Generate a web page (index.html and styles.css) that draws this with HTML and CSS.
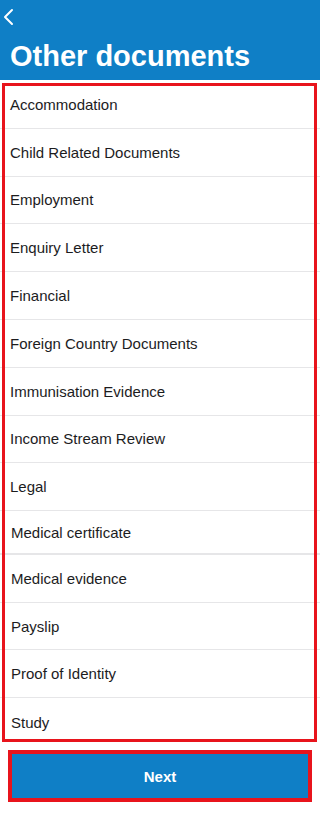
FILE: index.html
```html
<!DOCTYPE html>
<html lang="en">
<head>
<meta charset="utf-8">
<title>Other documents</title>
<link rel="stylesheet" href="styles.css">
</head>
<body>
<header class="header">
  <div class="nav">
    <svg class="back" width="12" height="18" viewBox="0 0 12 18"><path d="M10 2 L3 9 L10 16" fill="none" stroke="#fff" stroke-width="2" stroke-linecap="round" stroke-linejoin="round"/></svg>
  </div>
  <h1 class="title">Other documents</h1>
</header>
<section class="list">
  <div class="group">
    <div class="item">Accommodation</div>
    <div class="item">Child Related Documents</div>
    <div class="item">Employment</div>
    <div class="item">Enquiry Letter</div>
    <div class="item">Financial</div>
    <div class="item">Foreign Country Documents</div>
    <div class="item">Immunisation Evidence</div>
    <div class="item">Income Stream Review</div>
    <div class="item">Legal</div>
  </div>
  <div class="group group-b">
    <div class="item item-mc">Medical certificate</div>
    <div class="item item-me">Medical evidence</div>
    <div class="item item-p">Payslip</div>
    <div class="item item-pi">Proof of Identity</div>
    <div class="item item-s">Study</div>
  </div>
</section>
<div class="actions">
  <button class="next">Next</button>
</div>
</body>
</html>
```
FILE: styles.css
```css
html, body {
  margin: 0;
  padding: 0;
  background: #ffffff;
  font-family: "Liberation Sans", Arial, sans-serif;
}
.header {
  background: #0f7fc6;
  height: 80px;
  box-sizing: border-box;
  display: flex;
  flex-direction: column;
}
.nav {
  height: 39px;
  display: flex;
  align-items: flex-start;
}
.back {
  display: block;
  margin: 8px 0 0 2px;
}
.title {
  margin: 0;
  padding-left: 10px;
  color: #ffffff;
  font-size: 29px;
  line-height: 34px;
  font-weight: bold;
}
.list {
  position: relative;
  margin-top: 1px;
}
.list::after {
  content: "";
  position: absolute;
  top: 2px;
  left: 2px;
  right: 3px;
  bottom: 0;
  border: 3px solid #e8141c;
  pointer-events: none;
}
.item {
  height: 47.8px;
  box-sizing: border-box;
  display: flex;
  align-items: center;
  padding-left: 10px;
  font-size: 15px;
  color: #1c1c1e;
  border-bottom: 1px solid #e6e6e8;
}
.group-b .item {
  padding-left: 11px;
}
.item-mc { height: 44px; border-bottom-width: 2px; }
.item-me { height: 48px; }
.item-p { height: 47px; }
.item-pi { height: 48px; }
.item-s { height: 44px; border-bottom: none; padding-top: 4px; }
.actions {
  padding: 8px 8px 0;
}
.next {
  display: block;
  width: 100%;
  height: 52px;
  box-sizing: border-box;
  border: 4px solid #e8141c;
  background: #0f7fc6;
  color: #ffffff;
  font-family: "Liberation Sans", Arial, sans-serif;
  font-size: 15px;
  font-weight: bold;
  padding: 0;
}
```
